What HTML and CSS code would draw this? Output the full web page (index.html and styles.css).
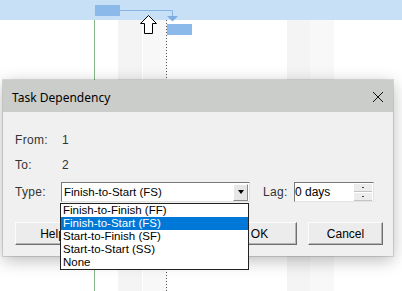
FILE: index.html
```html
<!DOCTYPE html>
<html lang="en">
<head>
  <meta charset="UTF-8">
  <title>Task Dependency</title>
  <link rel="stylesheet" href="styles.css">
</head>
<body>
  <div class="gantt">
    <div class="band"></div>
    <div class="shade shade-a" style="left: 118px;"></div>
    <div class="shade shade-b" style="left: 143px;"></div>
    <div class="shade shade-a" style="left: 287px;"></div>
    <div class="shade shade-b" style="left: 310px;"></div>
    <div class="today"></div>
    <div class="status"></div>
    <div class="bar" style="left: 95px; top: 5px;"></div>
    <div class="bar" style="left: 167px; top: 24px;"></div>
    <svg class="link" width="402" height="40" viewBox="0 0 402 40">
      <polyline points="120,10.5 172.5,10.5 172.5,16" fill="none" stroke="#86b4e3" stroke-width="1"/>
      <polygon points="167,16 178,16 172.5,21.5" fill="#7eaee2"/>
      <polygon points="148.5,15.5 156.5,23.5 152.5,23.5 152.5,33.5 144.5,33.5 144.5,23.5 140.5,23.5" fill="#fff" stroke="#000" stroke-width="1"/>
    </svg>
  </div>

  <div class="dialog">
    <div class="titlebar">
      <span class="title">Task Dependency</span>
      <svg class="close" width="12" height="12" viewBox="0 0 12 12">
        <path d="M1 1 L11 11 M11 1 L1 11" stroke="#111" stroke-width="1" fill="none"/>
      </svg>
    </div>
    <div class="body">
      <div class="row">
        <span class="label">From:</span>
        <span class="value">1</span>
      </div>
      <div class="row">
        <span class="label">To:</span>
        <span class="value">2</span>
      </div>
      <div class="row type-row">
        <span class="label">Type:</span>
        <div class="combo">
          <span class="combo-text">Finish-to-Start (FS)</span>
          <span class="combo-btn"><span class="tri"></span></span>
        </div>
        <span class="lag-label">Lag:</span>
        <div class="spin">
          <span class="spin-text">0 days</span>
          <span class="spin-btns">
            <span class="spin-btn"><i></i></span>
            <span class="spin-btn"><i></i></span>
          </span>
        </div>
      </div>
      <div class="buttons">
        <button class="btn">Help</button>
        <span class="spacer"></span>
        <button class="btn">OK</button>
        <button class="btn">Cancel</button>
      </div>
    </div>
    <ul class="list">
      <li>Finish-to-Finish (FF)</li>
      <li class="selected">Finish-to-Start (FS)</li>
      <li>Start-to-Finish (SF)</li>
      <li>Start-to-Start (SS)</li>
      <li>None</li>
    </ul>
  </div>
</body>
</html>
```

FILE: styles.css
```css
body {
  margin: 0;
  padding: 0;
  width: 402px;
  height: 291px;
  overflow: hidden;
  background: #fff;
  position: relative;
  font-family: "Liberation Sans", Arial, sans-serif;
}
.gantt {
  position: absolute;
  left: 0;
  top: 0;
  width: 402px;
  height: 291px;
}
.band {
  position: absolute;
  left: 0;
  top: 0;
  width: 402px;
  height: 20px;
  background: #c7e0f5;
}
.shade {
  position: absolute;
  top: 20px;
  bottom: 0;
  width: 24px;
}
.shade-a {
  background: #f4f4f4;
}
.shade-b {
  background: #f8f8f8;
}
.today {
  position: absolute;
  left: 94px;
  top: 20px;
  bottom: 0;
  width: 1px;
  background: #86b886;
}
.status {
  position: absolute;
  left: 166px;
  top: 20px;
  bottom: 0;
  width: 1px;
  background: repeating-linear-gradient(to bottom, #555 0, #555 1px, transparent 1px, transparent 3px);
}
.bar {
  position: absolute;
  width: 25px;
  height: 11px;
  background: #8bb9ea;
}
.link {
  position: absolute;
  left: 0;
  top: 0;
}

.dialog {
  position: absolute;
  left: 3px;
  top: 80px;
  width: 390px;
  height: 176px;
  background: #f0f0f0;
  box-shadow: 0 4px 16px rgba(0, 0, 0, 0.28), 0 0 0 1px rgba(0, 0, 0, 0.12);
  color: #222;
}
.titlebar {
  height: 32px;
  background: #cbcdca;
  display: flex;
  align-items: center;
  justify-content: space-between;
  padding: 0 9px 0 9px;
}
.title {
  font-family: "Noto Sans", "Open Sans", sans-serif;
  font-size: 12px;
  color: #000;
  padding-top: 2px;
}
.close {
  display: block;
  margin-top: 1px;
}
.body {
  padding: 21px 10px 0 12px;
  font-size: 12px;
}
.row {
  display: flex;
  align-items: center;
  height: 14px;
  margin-bottom: 11px;
  color: #333;
}
.label {
  width: 46px;
  letter-spacing: 0.3px;
}
.value {
  padding-left: 1px;
}
.type-row {
  height: 20px;
  margin-top: -1px;
  margin-bottom: 20px;
}
.combo {
  width: 187px;
  height: 18px;
  border: 1px solid;
  border-color: #7a7a7a #e3e3e3 #e3e3e3 #7a7a7a;
  background: #fff;
  display: flex;
  align-items: center;
  justify-content: space-between;
  color: #000;
}
.combo-text {
  padding-left: 2px;
  font-size: 11.5px;
}
.combo-btn {
  width: 13px;
  height: 15px;
  margin-right: 1px;
  background: #e6e6e6;
  border: 1px solid;
  border-color: #fff #8a8a8a #8a8a8a #fff;
  display: flex;
  align-items: center;
  justify-content: center;
}
.tri {
  width: 0;
  height: 0;
  border-left: 3.5px solid transparent;
  border-right: 3.5px solid transparent;
  border-top: 4px solid #000;
}
.lag-label {
  margin-left: 13px;
  width: 31px;
  letter-spacing: 0.3px;
}
.spin {
  width: 78px;
  height: 18px;
  border: 1px solid;
  border-color: #7a7a7a #e3e3e3 #e3e3e3 #7a7a7a;
  background: #fff;
  display: flex;
  align-items: center;
  justify-content: space-between;
  color: #000;
}
.spin-text {
  font-size: 12px;
}
.spin-btns {
  display: flex;
  flex-direction: column;
  gap: 1px;
  margin-right: 1px;
}
.spin-btn {
  width: 18px;
  height: 7px;
  background: #ececec;
  border: 1px solid #c4c4c4;
  border-width: 0 0 1px 0;
  display: flex;
  align-items: center;
  justify-content: center;
}
.spin-btn i {
  width: 2px;
  height: 1px;
  background: #444;
}
.buttons {
  display: flex;
  gap: 11px;
}
.spacer {
  flex: 1;
}
.btn {
  width: 75px;
  height: 23px;
  margin: 0;
  padding: 0;
  background: #ececec;
  border: 1px solid;
  border-color: #fcfcfc #6e6e6e #6e6e6e #fcfcfc;
  box-shadow: inset -1px -1px 0 #b5b5b5;
  font-family: "Liberation Sans", Arial, sans-serif;
  font-size: 12px;
  color: #000;
}
.list {
  position: absolute;
  left: 57px;
  top: 123px;
  width: 187px;
  margin: 0;
  padding: 0;
  list-style: none;
  background: #fff;
  border: 1px solid #222;
  font-size: 11.5px;
  color: #000;
}
.list li {
  height: 13px;
  line-height: 13px;
  padding-left: 2px;
}
.list .selected {
  background: #0078d7;
  color: #fff;
}
```
